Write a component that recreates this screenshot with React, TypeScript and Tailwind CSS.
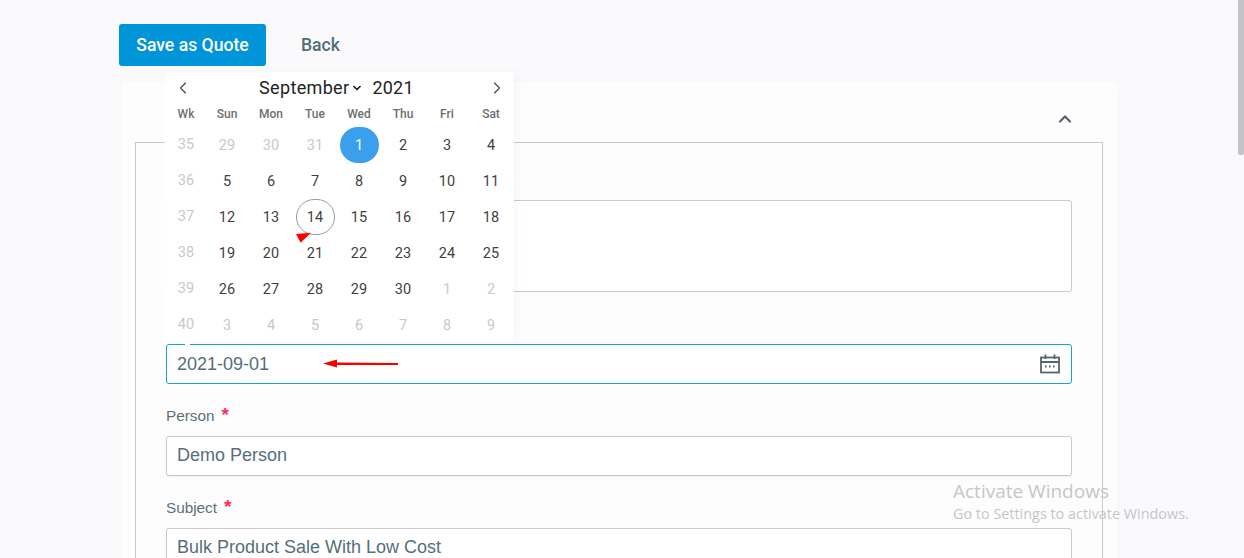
import { ChevronDown, ChevronLeft, ChevronRight, ChevronUp } from "lucide-react";

const weekdays = ["Wk", "Sun", "Mon", "Tue", "Wed", "Thu", "Fri", "Sat"];

const rows = [
  { wk: 35, days: [29, 30, 31, 1, 2, 3, 4], muted: [0, 1, 2] },
  { wk: 36, days: [5, 6, 7, 8, 9, 10, 11], muted: [] as number[] },
  { wk: 37, days: [12, 13, 14, 15, 16, 17, 18], muted: [] as number[] },
  { wk: 38, days: [19, 20, 21, 22, 23, 24, 25], muted: [] as number[] },
  { wk: 39, days: [26, 27, 28, 29, 30, 1, 2], muted: [5, 6] },
  { wk: 40, days: [3, 4, 5, 6, 7, 8, 9], muted: [0, 1, 2, 3, 4, 5, 6] },
];

function CalendarIcon() {
  return (
    <svg width="20" height="20" viewBox="0 0 20 20" fill="none" stroke="#56656d" strokeWidth="1.800">
      <rect x="1" y="3.500" width="18" height="15" />
      <path d="M1 8h18M5.500 0.500v4.500M14.500 0.500v4.500" />
      <path d="M5 12.500h2M9 12.500h2M13 12.500h2" strokeWidth="1.800" strokeDasharray="1.600 0.400" />
    </svg>
  );
}

function Calendar() {
  return (
    <div className="absolute left-[170px] top-[72px] h-[270px] w-[344px] bg-white font-['Roboto',sans-serif] shadow-[-5px_0_2px_#ffffff,3px_0_8px_rgba(0,0,0,0.03)]">
      <div className="flex h-[30px] items-center pl-[3px] pr-[7px] pt-[2px]">
        <ChevronLeft className="h-[20px] w-[20px] text-[#444]" strokeWidth={1.300} />
        <div className="ml-[66px] flex flex-1 items-center text-[18px] leading-none text-[#222]">
          <span className="tracking-[0.35px]">September</span>
          <ChevronDown className="ml-[2px] h-[12px] w-[12px] text-[#222]" strokeWidth={3.500} />
          <span className="ml-[9px] tracking-[0.2px]">2021</span>
        </div>
        <ChevronRight className="h-[20px] w-[20px] text-[#444]" strokeWidth={1.300} />
      </div>
      <div className="grid h-[25px] grid-cols-[35px_repeat(7,44px)] items-center pb-[2px] text-center text-[12px] font-medium leading-none text-[#6e6e6e]">
        {weekdays.map((d, i) => (
          <span key={d} className={i === 0 ? "-ml-[3px]" : ""}>
            {d}
          </span>
        ))}
      </div>
      {rows.map((row) => (
        <div key={row.wk} className="grid h-[36px] grid-cols-[35px_repeat(7,44px)] items-center text-center text-[14.500px] leading-none text-[#3f3f3f]">
          <span className="-ml-[3px] text-[#c9c9c9]">{row.wk}</span>
          {row.days.map((day, i) => {
            const selected = row.wk === 35 && day === 1;
            const today = row.wk === 37 && day === 14;
            let cls = "mx-auto flex h-[36px] w-[39px] items-center justify-center rounded-full pt-[2px]";
            if (selected) cls += " bg-[#3a9fec] text-white";
            if (today) cls += " border border-[#9a9a9a]";
            if (row.muted.includes(i)) cls += " text-[#c9c9c9]";
            return (
              <span key={i} className={cls}>
                {day}
              </span>
            );
          })}
        </div>
      ))}
    </div>
  );
}

function Annotations() {
  return (
    <>
      <svg className="absolute left-[295px] top-[231px]" width="18" height="13" viewBox="0 0 18 13">
        <polygon points="1,3 16,1.700 5.700,11.700" fill="#ff0000" />
      </svg>
      <svg className="absolute left-[320px] top-[358px]" width="80" height="12" viewBox="0 0 80 12">
        <polygon points="3,5.500 17,1.500 17,4.500 78,5 78,7 17,7 17,9.500" fill="#f60000" />
      </svg>
      <span className="absolute left-[185px] top-[342px] h-[4px] w-[5px] bg-white" />
    </>
  );
}

function Field({ label, value }: { label: string; value: string }) {
  return (
    <div>
      <div className="h-[30px] text-[15.300px] leading-[20px] text-[#5d6f7b]">
        {label}
        <span className="ml-[7px] text-[19px] font-bold leading-[18px] text-[#fb2e5a]">*</span>
      </div>
      <div className="flex h-[40px] items-center rounded-[3px] border border-[#c9c9cc] bg-white px-[10px] pb-[2px] text-[18px] text-[#566e7c] shadow-[0_1px_1px_rgba(0,0,0,0.05)]">
        {value}
      </div>
    </div>
  );
}

export default function App() {
  return (
    <div className="relative h-[558px] w-full overflow-hidden bg-[#fafafc] font-['Liberation_Sans',sans-serif]">
      <div className="flex items-center pl-[119px] pt-[24px]">
        <button className="h-[42px] w-[147px] rounded-[3px] bg-[#0095d8] font-['Roboto',sans-serif] text-[17.600px] font-medium text-white">
          Save as Quote
        </button>
        <span className="ml-[35px] font-['Roboto',sans-serif] text-[17.600px] font-medium text-[#546e7a]">Back</span>
      </div>

      <div className="ml-[122px] mt-[16px] w-[995px] bg-[#fdfdfe] shadow-[0_0_12px_rgba(0,0,0,0.01)]">
        <div className="flex h-[60px] items-end justify-end pb-[13px] pr-[42px]">
          <ChevronUp className="h-[20px] w-[20px] text-[#56606a]" strokeWidth={2.600} />
        </div>
        <div className="mx-[13px] w-[968px] border border-[#c9c9cc] px-[30px] pt-[57px]">
          <div className="h-[92px] rounded-[3px] border border-[#c9c9cc] bg-white" />
          <div className="mt-[52px] flex h-[40px] items-center justify-between rounded-[3px] border border-[#1ba3cc] bg-white pl-[10px] pr-[11px] text-[18px] text-[#566e7c]">
            <span>2021-09-01</span>
            <CalendarIcon />
          </div>
          <div className="mt-[22px]">
            <Field label="Person" value="Demo Person" />
          </div>
          <div className="mt-[22px]">
            <Field label="Subject" value="Bulk Product Sale With Low Cost" />
          </div>
        </div>
      </div>

      <Calendar />
      <Annotations />

      <div className="absolute right-0 top-0 h-[155px] w-[6px] rounded-b-[2px] bg-[#c4c4c6]" />

      <div className="absolute left-[953px] top-[479px] font-['Open_Sans',sans-serif] text-[#c6c6c8]">
        <div className="text-[19px] leading-[24px]">Activate Windows</div>
        <div className="mt-[1px] text-[14.400px] leading-[20px]">Go to Settings to activate Windows.</div>
      </div>
    </div>
  );
}
